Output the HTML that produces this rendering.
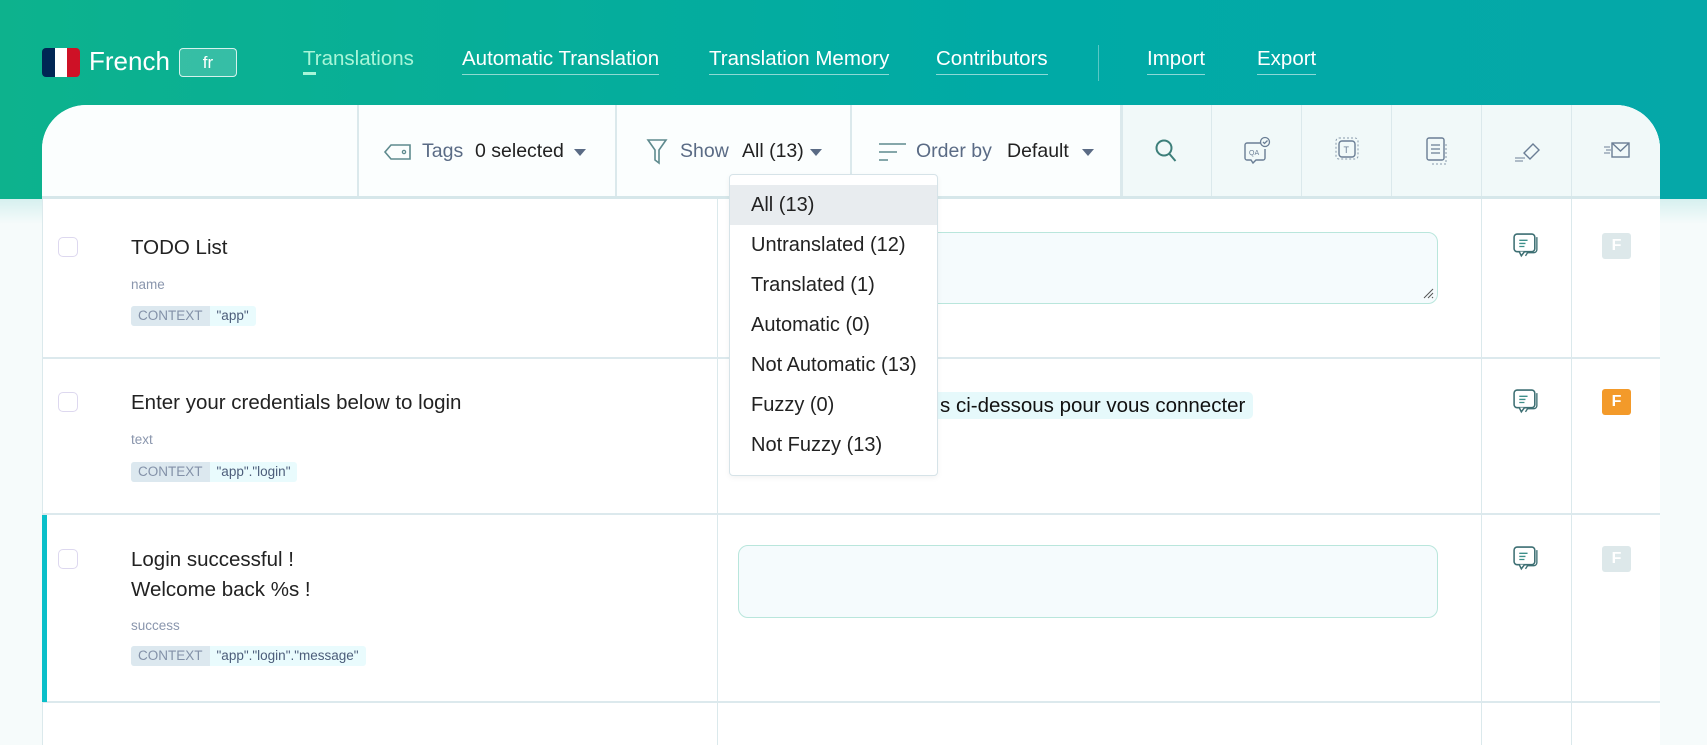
<!DOCTYPE html>
<html><head><meta charset="utf-8"><style>
*{box-sizing:border-box;margin:0;padding:0}
body{width:1707px;height:723px;overflow:hidden;background:#f6fbfb;font-family:"Liberation Sans",sans-serif;position:relative;color:#222}
.hdr{position:absolute;left:0;top:0;width:1707px;height:199px;background:linear-gradient(90deg,#0db28d,#00aaa6 60%,#05a8a8)}
.band{position:absolute;left:0;top:199px;width:1707px;height:25px;background:linear-gradient(#d6f0ef,#f6fbfb)}
.a{position:absolute;white-space:nowrap}
.nav{color:#fff;font-size:20.5px;top:47px;border-bottom:1px solid rgba(255,255,255,.55);padding-bottom:3px}
.card{position:absolute;left:42px;top:105px;width:1618px;height:640px;background:#fff;border-radius:44px 44px 0 0;overflow:hidden}
.tb{position:absolute;left:0;top:0;width:1618px;height:94px;background:#fbfefe;border-bottom:3px solid #d6e7ea}
.vs{position:absolute;top:0;width:2px;background:#dbe9ec}
.ic{position:absolute;top:0;height:91px;background:#f1f9f9;border-left:1px solid #dbe9ec}
.tl{font-size:19.5px;color:#5a6b85;top:35px}
.tv{font-size:19.5px;color:#222;top:35px}
.caret{position:absolute;width:0;height:0;border-left:6px solid transparent;border-right:6px solid transparent;border-top:7px solid #5a6b85}
.hl{position:absolute;left:0;width:1618px;height:2px;background:#dce9ed}
.cb{position:absolute;left:16px;width:20px;height:20px;border:1.5px solid #ddd8ef;border-radius:5px;background:#fff}
.src{font-size:20.5px;color:#222;left:89px}
.key{font-size:13.5px;color:#8a96ad;left:89px}
.ctx{position:absolute;left:89px;height:20px;font-size:13.5px;line-height:20px;border-radius:3px;overflow:hidden;background:#e9fbfd;color:#4c5d7a}
.ctx b{font-weight:normal;background:#dce8ef;color:#8391a8;padding:0 7px;display:inline-block;margin-right:7px}
.ctx span{padding-right:7px}
.ta{position:absolute;left:696px;width:700px;border:1.5px solid #b9e6dc;border-radius:10px;background:#f5fbfd}
.F{position:absolute;left:1560px;width:29px;height:26px;border-radius:3px;color:#fff;font-size:16px;text-align:center;line-height:26px;font-weight:bold}
.dd{position:absolute;left:729px;top:174px;width:209px;height:302px;background:#fff;border:1px solid #d6e3e8;border-radius:4px;box-shadow:0 2px 6px rgba(0,0,0,.05)}
.dd div{height:40px;line-height:40px;padding-left:21px;font-size:20px;color:#222}
</style></head><body>
<div class="hdr"></div><div class="band"></div>
<div class="a" style="left:42px;top:48px;width:38px;height:29px;border-radius:4px;overflow:hidden;display:flex"><i style="flex:1;background:#002654"></i><i style="flex:1;background:#fff"></i><i style="flex:1;background:#ce1126"></i></div>
<div class="a" style="left:89px;top:46px;font-size:26px;color:#fff">French</div>
<div class="a" style="left:179px;top:48px;width:58px;height:29px;border:1px solid rgba(255,255,255,.8);border-radius:4px;background:rgba(255,255,255,.18);color:#fff;font-size:17px;text-align:center;line-height:27px">fr</div>
<div class="a" style="left:303px;top:47px;font-size:20.5px;color:#a8f5d8">Translations</div>
<div class="a" style="left:303px;top:72px;width:13px;height:3px;background:#a8f5d8"></div>
<div class="a nav" style="left:462px">Automatic Translation</div>
<div class="a nav" style="left:709px">Translation Memory</div>
<div class="a nav" style="left:936px">Contributors</div>
<div class="a" style="left:1098px;top:45px;width:1px;height:36px;background:rgba(255,255,255,.35)"></div>
<div class="a nav" style="left:1147px">Import</div>
<div class="a nav" style="left:1257px">Export</div>

<div class="card">
 <div class="tb">
  <div class="vs" style="left:315px;height:91px"></div>
  <div class="vs" style="left:573px;height:91px"></div>
  <div class="vs" style="left:808px;height:91px"></div>
  <div class="ic" style="left:1078px;width:91px;border-left:3px solid #dbe9ec"></div>
  <div class="ic" style="left:1169px;width:90px"></div>
  <div class="ic" style="left:1259px;width:90px"></div>
  <div class="ic" style="left:1349px;width:90px"></div>
  <div class="ic" style="left:1439px;width:90px"></div>
  <div class="ic" style="left:1529px;width:89px"></div>
  <svg class="a" style="left:341px;top:37px" width="30" height="20" viewBox="0 0 30 20"><path d="M8 3h19v14H8L2 10z" fill="none" stroke="#5e8a8e" stroke-width="1.6"/><circle cx="21" cy="10" r="1.6" fill="none" stroke="#5e8a8e" stroke-width="1.3"/></svg>
  <div class="a tl" style="left:380px">Tags</div><div class="a tv" style="left:433px">0 selected</div><div class="caret" style="left:532px;top:44px"></div>
  <svg class="a" style="left:604px;top:33px" width="22" height="28" viewBox="0 0 22 28"><path d="M2 2h18l-7 10v13l-4-3V12z" fill="none" stroke="#5e8a8e" stroke-width="1.6"/></svg>
  <div class="a tl" style="left:638px">Show</div><div class="a tv" style="left:700px">All (13)</div><div class="caret" style="left:768px;top:44px"></div>
  <svg class="a" style="left:836px;top:36px" width="30" height="22" viewBox="0 0 30 22"><path d="M1 3h27M1 11h18M1 19h9" stroke="#5e8a8e" stroke-width="1.6"/></svg>
  <div class="a tl" style="left:874px">Order by</div><div class="a tv" style="left:965px">Default</div><div class="caret" style="left:1040px;top:44px"></div>
  <svg class="a" style="left:1112px;top:33px" width="24" height="26" viewBox="0 0 24 26"><circle cx="10" cy="10" r="7.5" fill="none" stroke="#3d7f7a" stroke-width="2"/><path d="M15.5 16l6 7" stroke="#3d7f7a" stroke-width="2"/></svg>
  <svg class="a" style="left:1201px;top:31px" width="28" height="30" viewBox="0 0 28 30"><path d="M4 7h14M22 13v9a2 2 0 0 1-2 2h-7l-3 3-2-3H4a2 2 0 0 1-2-2V9a2 2 0 0 1 2-2" fill="none" stroke="#6a7e95" stroke-width="1.4"/><text x="6" y="19" font-size="7" fill="#6a7e95" font-family="Liberation Sans">QA</text><circle cx="22" cy="6" r="4.5" fill="none" stroke="#6a7e95" stroke-width="1.3"/><path d="M20 6l1.5 1.5 3-3" fill="none" stroke="#6a7e95" stroke-width="1.3"/></svg>
  <svg class="a" style="left:1292px;top:31px" width="26" height="30" viewBox="0 0 26 30"><rect x="2" y="2" width="22" height="21" rx="3" fill="none" stroke="#8899aa" stroke-width="1" stroke-dasharray="2 2"/><rect x="5" y="5" width="16" height="16" rx="3" fill="none" stroke="#6a7e95" stroke-width="1.4"/><text x="9.5" y="17" font-size="9" fill="#6a7e95" font-family="Liberation Sans">T</text></svg>
  <svg class="a" style="left:1383px;top:31px" width="26" height="32" viewBox="0 0 26 32"><rect x="2" y="2" width="17" height="22" rx="2" fill="none" stroke="#6a7e95" stroke-width="1.4"/><path d="M6 9h9M6 13h9M6 17h9" stroke="#6a7e95" stroke-width="1.2"/><path d="M21 8v20H7" fill="none" stroke="#8899aa" stroke-width="1" stroke-dasharray="2 2"/></svg>
  <svg class="a" style="left:1470px;top:34px" width="30" height="26" viewBox="0 0 30 26"><path d="M12 14l9-9 6 6-9 9z" fill="none" stroke="#6a7e95" stroke-width="1.4"/><path d="M3 19h10M3 22h8" stroke="#8899aa" stroke-width="1.2"/></svg>
  <svg class="a" style="left:1560px;top:35px" width="30" height="22" viewBox="0 0 30 22"><rect x="10" y="3" width="17" height="14" fill="none" stroke="#6a7e95" stroke-width="1.4"/><path d="M10 3l8.5 8 8.5-8" fill="none" stroke="#6a7e95" stroke-width="1.4"/><path d="M2 7h6M4 10h5M2 13h6" stroke="#8899aa" stroke-width="1.2"/></svg>
 </div>
 <div class="vs" style="left:675px;top:94px;height:560px;width:1px"></div>
 <div class="vs" style="left:1439px;top:94px;height:560px;width:1px"></div>
 <div class="vs" style="left:1529px;top:94px;height:560px;width:1px"></div>
 <div class="vs" style="left:0;top:94px;height:560px;width:1px"></div>
 <div class="hl" style="top:252px"></div>
 <div class="hl" style="top:408px"></div>
 <div class="hl" style="top:596px"></div>
 <div class="a" style="left:0;top:410px;width:5px;height:187px;background:#0abfc9"></div>
 <div class="cb" style="top:132px"></div>
 <div class="a src" style="top:131px">TODO List</div>
 <div class="a key" style="top:172px">name</div>
 <div class="ctx" style="top:201px"><b>CONTEXT</b><span>"app"</span></div>
 <div class="ta" style="top:127px;height:72px"></div>
 <svg class="a" style="left:1380px;top:182px" width="12" height="12"><path d="M2 11L11 2M6 11l5-5M10 11l1-1" stroke="#555" stroke-width="1"/></svg>
 <div class="cb" style="top:287px"></div>
 <div class="a src" style="top:286px">Enter your credentials below to login</div>
 <div class="a key" style="top:327px">text</div>
 <div class="ctx" style="top:357px"><b>CONTEXT</b><span>"app"."login"</span></div>
 <div class="a" style="left:860px;top:287px;height:27px;padding:2px 8px 0 38px;background:#e6f9fb;border-radius:5px;font-size:20.5px;color:#111">s ci-dessous pour vous connecter</div>
 <div class="cb" style="top:444px"></div>
 <div class="a src" style="top:443px">Login successful !</div>
 <div class="a src" style="top:473px">Welcome back %s !</div>
 <div class="a key" style="top:513px">success</div>
 <div class="ctx" style="top:541px"><b>CONTEXT</b><span>"app"."login"."message"</span></div>
 <div class="ta" style="top:440px;height:73px"></div>
 <svg class="a" style="left:1470px;top:127px" width="28" height="29" viewBox="0 0 27 28"><rect x="2" y="2" width="20" height="17" rx="3" fill="#fff" stroke="#3d6f73" stroke-width="1.5"/><path d="M7 19l2 4 3-4" fill="#fff" stroke="#3d6f73" stroke-width="1.5"/><path d="M24 5v12a3 3 0 0 1-3 3h-6l-2 3" fill="none" stroke="#3d6f73" stroke-width="1.3"/><path d="M7 8h8M7 11h6M7 14h5" stroke="#3d8f8a" stroke-width="1.3"/></svg>
 <svg class="a" style="left:1470px;top:283px" width="28" height="29" viewBox="0 0 27 28"><rect x="2" y="2" width="20" height="17" rx="3" fill="#fff" stroke="#3d6f73" stroke-width="1.5"/><path d="M7 19l2 4 3-4" fill="#fff" stroke="#3d6f73" stroke-width="1.5"/><path d="M24 5v12a3 3 0 0 1-3 3h-6l-2 3" fill="none" stroke="#3d6f73" stroke-width="1.3"/><path d="M7 8h8M7 11h6M7 14h5" stroke="#3d8f8a" stroke-width="1.3"/></svg>
 <svg class="a" style="left:1470px;top:440px" width="28" height="29" viewBox="0 0 27 28"><rect x="2" y="2" width="20" height="17" rx="3" fill="#fff" stroke="#3d6f73" stroke-width="1.5"/><path d="M7 19l2 4 3-4" fill="#fff" stroke="#3d6f73" stroke-width="1.5"/><path d="M24 5v12a3 3 0 0 1-3 3h-6l-2 3" fill="none" stroke="#3d6f73" stroke-width="1.3"/><path d="M7 8h8M7 11h6M7 14h5" stroke="#3d8f8a" stroke-width="1.3"/></svg>
 <div class="F" style="top:128px;background:#dde8ea">F</div>
 <div class="F" style="top:284px;background:#f39a2a">F</div>
 <div class="F" style="top:441px;background:#dde8ea">F</div>
</div>
<div class="dd">
 <div style="background:#e8ecef;margin-top:10px">All (13)</div>
 <div>Untranslated (12)</div>
 <div>Translated (1)</div>
 <div>Automatic (0)</div>
 <div>Not Automatic (13)</div>
 <div>Fuzzy (0)</div>
 <div>Not Fuzzy (13)</div>
</div>
</body></html>
